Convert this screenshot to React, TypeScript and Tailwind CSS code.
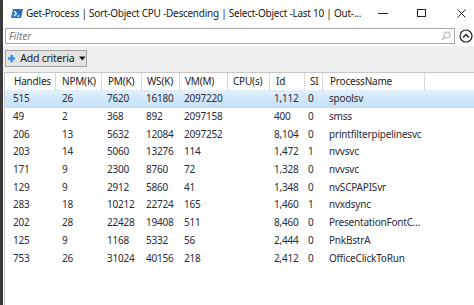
import React from "react";

const rows = [
  ["515", "26", "7620", "16180", "2097220", "", "1,112", "0", "spoolsv"],
  ["49", "2", "368", "892", "2097158", "", "400", "0", "smss"],
  ["206", "13", "5632", "12084", "2097252", "", "8,104", "0", "printfilterpipelinesvc"],
  ["203", "14", "5060", "13276", "114", "", "1,472", "1", "nvvsvc"],
  ["171", "9", "2300", "8760", "72", "", "1,328", "0", "nvvsvc"],
  ["129", "9", "2912", "5860", "41", "", "1,348", "0", "nvSCPAPISvr"],
  ["283", "18", "10212", "22724", "165", "", "1,460", "1", "nvxdsync"],
  ["202", "28", "22428", "19408", "511", "", "8,460", "0", "PresentationFontC..."],
  ["125", "9", "1168", "5332", "56", "", "2,444", "0", "PnkBstrA"],
  ["753", "26", "31024", "40156", "218", "", "2,412", "0", "OfficeClickToRun"],
];

const headers = ["Handles", "NPM(K)", "PM(K)", "WS(K)", "VM(M)", "CPU(s)", "Id", "SI", "ProcessName"];
const widths = ["w-[51px]", "w-[46px]", "w-[40px]", "w-[38px]", "w-[48px]", "w-[42px]", "w-[35px]", "w-[18px]", "w-[102px]"];
const headPad = ["pl-[9px]", "pl-[6px]", "pl-[6px]", "pl-[5px]", "pl-[5px]", "pl-[5px]", "pl-[6px]", "pl-[5px]", "pl-[7px]"];
const cellPad = ["pl-[8px]", "pl-[6px]", "pl-[5px]", "pl-[4px]", "pl-[4px]", "pl-[4px]", "pl-[4px]", "pl-[3px]", "pl-[6px]"];

function PsIcon() {
  return (
    <svg width="12" height="9" viewBox="0 0 12 9" className="shrink-0">
      <polygon points="2,0 12,0 10,9 0,9" fill="#2671be" />
      <polyline points="3,2 5.5,4.5 3,7" fill="none" stroke="#fff" strokeWidth="1.2" />
      <line x1="6" y1="7" x2="8.5" y2="7" stroke="#fff" strokeWidth="1.1" />
    </svg>
  );
}

export default function App() {
  return (
    <div
      className="w-[474px] h-[305px] overflow-hidden bg-white border-l-[3px] border-[#3a3a3a] flex flex-col text-[#1a1a1a]"
      style={{ fontFamily: '"Noto Sans", "Open Sans", sans-serif' }}
    >
      {/* Title bar */}
      <div className="h-[26px] flex items-center shrink-0">
        <div className="pl-[8px] flex items-center gap-[3px] min-w-0">
          <PsIcon />
          <span className="text-[10px] tracking-[-0.25px] leading-none whitespace-nowrap">
            Get-Process | Sort-Object CPU -Descending | Select-Object -Last 10 | Out-...
          </span>
        </div>
        <div className="ml-auto flex items-center h-full shrink-0">
          <div className="w-[10px] h-px bg-[#222] mr-[29px]" />
          <div className="w-[9px] h-[8px] border border-[#222] mr-[31px]" />
          <svg width="9" height="9" viewBox="0 0 9 9" className="mr-[8px]">
            <path d="M0.5 0.5 L8.5 8.5 M8.5 0.5 L0.5 8.5" stroke="#222" strokeWidth="1" />
          </svg>
        </div>
      </div>

      {/* Filter row */}
      <div className="h-[20px] flex items-start shrink-0 pl-[2px] pt-[2px]">
        <div className="w-[450px] h-[16px] border border-[#a9a9a9] flex items-center px-[3px]">
          <span className="text-[10px] italic text-[#7a7a7a] leading-none">Filter</span>
          <svg width="10" height="10" viewBox="0 0 10 10" className="ml-auto">
            <circle cx="6" cy="4" r="3" fill="none" stroke="#b9b9b9" strokeWidth="1.2" />
            <line x1="4" y1="6" x2="1" y2="9" stroke="#b9b9b9" strokeWidth="1.5" />
          </svg>
        </div>
        <svg width="14" height="14" viewBox="0 0 14 14" className="ml-[4px] mt-[1px]">
          <circle cx="7" cy="7" r="6" fill="none" stroke="#222" strokeWidth="1.2" />
          <polyline points="4,8.5 7,5.5 10,8.5" fill="none" stroke="#222" strokeWidth="1.4" />
        </svg>
      </div>

      {/* Criteria row */}
      <div className="h-[26px] bg-[#f0f0f0] shrink-0 pl-[2px] pt-[4px]">
        <div className="w-[82px] h-[17px] border border-[#a0a0a0] bg-[#e3e3e3] flex items-center">
          <svg width="9" height="9" viewBox="0 0 9 9" className="ml-[2px]">
            <rect x="3" y="0" width="3" height="9" fill="#3a8ee6" />
            <rect x="0" y="3" width="9" height="3" fill="#3a8ee6" />
          </svg>
          <span className="text-[10.5px] tracking-[-0.25px] leading-none ml-[5px] whitespace-nowrap">Add criteria</span>
          <svg width="8" height="5" viewBox="0 0 8 5" className="ml-[5px]">
            <polygon points="0,0 8,0 4,5" fill="#111" />
          </svg>
        </div>
      </div>

      {/* Table */}
      <div className="flex-1 border-t border-[#c8c8c8] ml-px border-l border-l-[#c8c8c8] text-[10px] tracking-[-0.2px]">
        <div className="h-[17px] flex items-center">
          {headers.map((h, i) => (
            <div
              key={h}
              className={`${widths[i]} ${headPad[i]} h-full flex items-center border-r border-[#d9d9d9] whitespace-nowrap shrink-0 text-[#222]`}
            >
              {h}
            </div>
          ))}
        </div>
        {rows.map((r, ri) => (
          <div
            key={ri}
            className={`h-[17.7px] flex items-center text-[#2a2a3a] ${
              ri === 0 ? "bg-gradient-to-b from-[#e1f0fc] to-[#c2e0f8]" : ""
            }`}
          >
            {r.map((c, ci) => (
              <div key={ci} className={`${widths[ci]} ${cellPad[ci]} whitespace-nowrap shrink-0`}>
                {c}
              </div>
            ))}
          </div>
        ))}
      </div>
    </div>
  );
}
